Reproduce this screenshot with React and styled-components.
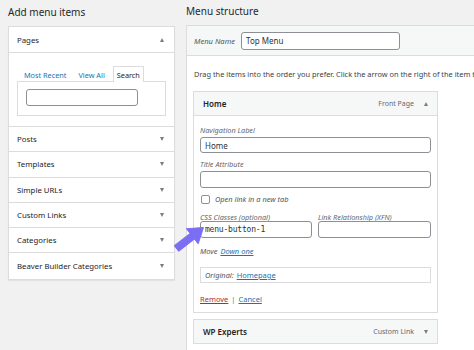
import React from "react";
import styled, { createGlobalStyle } from "styled-components";

const Global = createGlobalStyle`
  html, body { margin: 0; padding: 0; background: #f1f1f1; }
  body { font-family: "Noto Sans", "Open Sans", sans-serif; color: #1d2327; overflow: hidden; }
  * { box-sizing: border-box; }
`;

const Page = styled.div`
  display: flex;
  gap: 11px;
  padding-left: 8px;
  width: 474px;
  height: 350px;
  overflow: hidden;
  position: relative;
`;

const LeftCol = styled.div`
  width: 167px;
  flex: none;
`;

const RightCol = styled.div`
  flex: none;
  width: 320px;
`;

const Heading = styled.h2`
  margin: 0;
  height: ${(p) => p.$h}px;
  display: flex;
  align-items: center;
  font-size: 10px;
  font-weight: 400;
  color: #23282d;
  padding-bottom: 3px;
`;

const Accordion = styled.div`
  background: #fff;
  border: 1px solid #dcdcde;
  box-shadow: 0 1px 1px rgba(0, 0, 0, 0.06);
`;

const SectionHead = styled.div`
  height: ${(p) => p.$h || 25.3}px;
  display: flex;
  align-items: center;
  justify-content: space-between;
  padding: 0 10px 0 8px;
  font-size: 7.8px;
  color: #1d2327;
  border-bottom: ${(p) => (p.$last ? "none" : "1px solid #dcdcde")};
`;

const Tri = styled.span`
  width: 0;
  height: 0;
  border-left: 2.5px solid transparent;
  border-right: 2.5px solid transparent;
  ${(p) =>
    p.$up
      ? "border-bottom: 4px solid #787c82;"
      : "border-top: 4px solid #787c82;"}
`;

const PagesBody = styled.div`
  height: 74px;
  padding: 14px 8px 0 8px;
  border-bottom: 1px solid #dcdcde;
`;

const Tabs = styled.div`
  display: flex;
  align-items: flex-end;
  height: 15px;
  padding-left: 3px;
`;

const Tab = styled.div`
  font-size: 7.3px;
  height: 16px;
  display: flex;
  align-items: center;
  padding: 0 3px;
  margin-right: 4px;
  color: ${(p) => (p.$active ? "#1d2327" : "#2271b1")};
  background: ${(p) => (p.$active ? "#fff" : "transparent")};
  border: 1px solid ${(p) => (p.$active ? "#dcdcde" : "transparent")};
  border-bottom: none;
  position: relative;
  z-index: 1;
`;

const TabPanel = styled.div`
  border: 1px solid #dcdcde;
  margin-top: -1px;
  height: 35px;
  padding: 7px 0 0 8px;
`;

const Input = styled.div`
  width: ${(p) => p.$w}px;
  height: ${(p) => p.$h || 17}px;
  border: 1px solid #8c8f94;
  border-radius: 3px;
  background: #fff;
  display: flex;
  align-items: center;
  padding-left: ${(p) => p.$pl || 4}px;
  font-size: 8px;
  color: #2c3338;
  font-family: ${(p) => (p.$mono ? '"DejaVu Sans Mono", monospace' : "inherit")};
  letter-spacing: ${(p) => (p.$mono ? "-0.2px" : "0")};
  flex: none;
`;

const MenuBox = styled.div`
  background: #fff;
  border: 1px solid #dcdcde;
  border-right: none;
  height: 340px;
`;

const MenuHeader = styled.div`
  height: 30px;
  background: #f6f7f7;
  border-bottom: 1px solid #dcdcde;
  display: flex;
  align-items: center;
  padding-left: 7px;
  gap: 6px;
`;

const Label = styled.span`
  font-size: ${(p) => p.$fs || 7.4}px;
  font-style: italic;
  color: #50575e;
`;

const Hint = styled.p`
  margin: 0;
  height: 35px;
  display: flex;
  align-items: center;
  padding-left: 7px;
  font-size: 7.4px;
  color: #3c434a;
  white-space: nowrap;
`;

const Item = styled.div`
  margin-left: 6px;
  width: 245px;
`;

const ItemHead = styled.div`
  height: 25px;
  border: 1px solid #dcdcde;
  background: #f6f7f7;
  display: flex;
  align-items: center;
  padding: 0 9px 0 9px;
  font-size: 8px;
  font-weight: 600;
  color: #1d2327;
`;

const ItemTitle = styled.span`
  flex: 1;
`;

const ItemType = styled.span`
  font-size: 7px;
  font-weight: 400;
  color: #646970;
  margin-right: 10px;
`;

const ItemBody = styled.div`
  border: 1px solid #dcdcde;
  border-top: none;
  height: 197px;
  padding: 9px 6px 0 6px;
  display: flex;
  flex-direction: column;
  margin-bottom: 6px;
`;

const Field = styled.div`
  display: flex;
  flex-direction: column;
  gap: ${(p) => p.$gap || 0}px;
  margin-bottom: ${(p) => p.$mb || 0}px;
`;

const FieldLabel = styled.span`
  font-size: 7.3px;
  font-style: italic;
  color: #646970;
  height: ${(p) => p.$h || 10}px;
  display: flex;
  align-items: center;
  white-space: nowrap;
`;

const CheckRow = styled.div`
  display: flex;
  align-items: center;
  gap: 5px;
  height: 10px;
  margin: 6px 0 9px 1px;
`;

const Checkbox = styled.span`
  width: 9px;
  height: 9px;
  border: 1px solid #8c8f94;
  border-radius: 2px;
  background: #fff;
`;

const TwoCol = styled.div`
  display: flex;
  gap: 6px;
`;

const Line = styled.div`
  display: flex;
  align-items: center;
  gap: 3px;
  height: 12px;
  margin-top: ${(p) => p.$mt || 0}px;
  margin-bottom: ${(p) => p.$mb || 0}px;
`;

const Link = styled.span`
  color: ${(p) => (p.$red ? "#b32d2e" : "#2271b1")};
  text-decoration: underline;
  font-style: ${(p) => (p.$italic ? "italic" : "normal")};
  font-size: 7.5px;
`;

const Sep = styled.span`
  color: #646970;
  font-size: 7.5px;
`;

const Original = styled.div`
  width: 231px;
  height: 16px;
  border: 1px solid #dcdcde;
  display: flex;
  align-items: center;
  padding-left: 4px;
  gap: 3px;
`;

const Arrow = styled.svg`
  position: absolute;
  left: 173px;
  top: 224px;
  width: 34px;
  height: 28px;
`;

const leftSections = [
  "Posts",
  "Templates",
  "Simple URLs",
  "Custom Links",
  "Categories",
  "Beaver Builder Categories",
];

export default function App() {
  return (
    <>
      <Global />
      <Page>
        <LeftCol>
          <Heading $h={26}>Add menu items</Heading>
          <Accordion>
            <SectionHead $h={26}>
              Pages <Tri $up />
            </SectionHead>
            <PagesBody>
              <Tabs>
                <Tab>Most Recent</Tab>
                <Tab>View All</Tab>
                <Tab $active>Search</Tab>
              </Tabs>
              <TabPanel>
                <Input $w={112} />
              </TabPanel>
            </PagesBody>
            {leftSections.map((s, i) => (
              <SectionHead key={s} $last={i === leftSections.length - 1}>
                {s} <Tri />
              </SectionHead>
            ))}
          </Accordion>
        </LeftCol>
        <RightCol>
          <Heading $h={25}>Menu structure</Heading>
          <MenuBox>
            <MenuHeader>
              <Label $fs={7.6}>Menu Name</Label>
              <Input $w={159} $h={18}>Top Menu</Input>
            </MenuHeader>
            <Hint>
              Drag the items into the order you prefer. Click the arrow on the right of the item to reveal additional configuration options.
            </Hint>
            <Item>
              <ItemHead>
                <ItemTitle>Home</ItemTitle>
                <ItemType>Front Page</ItemType>
                <Tri $up />
              </ItemHead>
              <ItemBody>
                <Field $mb={6} $gap={2}>
                  <FieldLabel>Navigation Label</FieldLabel>
                  <Input $w={231} $h={16}>Home</Input>
                </Field>
                <Field $gap={2}>
                  <FieldLabel>Title Attribute</FieldLabel>
                  <Input $w={231} $h={17} />
                </Field>
                <CheckRow>
                  <Checkbox />
                  <Label>Open link in a new tab</Label>
                </CheckRow>
                <TwoCol>
                  <Field>
                    <FieldLabel $h={8}>CSS Classes (optional)</FieldLabel>
                    <Input $w={112} $h={17} $mono>menu-button-1</Input>
                  </Field>
                  <Field>
                    <FieldLabel $h={8}>Link Relationship (XFN)</FieldLabel>
                    <Input $w={113} $h={17} />
                  </Field>
                </TwoCol>
                <Line $mt={7} $mb={10}>
                  <Label>Move</Label>
                  <Link $italic>Down one</Link>
                </Line>
                <Original>
                  <Label>Original:</Label>
                  <Link>Homepage</Link>
                </Original>
                <Line $mt={10}>
                  <Link $red>Remove</Link>
                  <Sep>|</Sep>
                  <Link>Cancel</Link>
                </Line>
              </ItemBody>
            </Item>
            <Item>
              <ItemHead>
                <ItemTitle>WP Experts</ItemTitle>
                <ItemType>Custom Link</ItemType>
                <Tri />
              </ItemHead>
            </Item>
          </MenuBox>
        </RightCol>
        <Arrow viewBox="0 0 34 28">
          <g transform="translate(17 14) rotate(-38)">
            <path
              d="M-17 -3.5 L3 -3.5 L3 -9.5 L17 0 L3 9.5 L3 3.5 L-17 3.5 Z"
              fill="#7b6ef2"
              stroke="#7b6ef2"
              strokeLinejoin="round"
              strokeWidth="1"
            />
          </g>
        </Arrow>
      </Page>
    </>
  );
}
